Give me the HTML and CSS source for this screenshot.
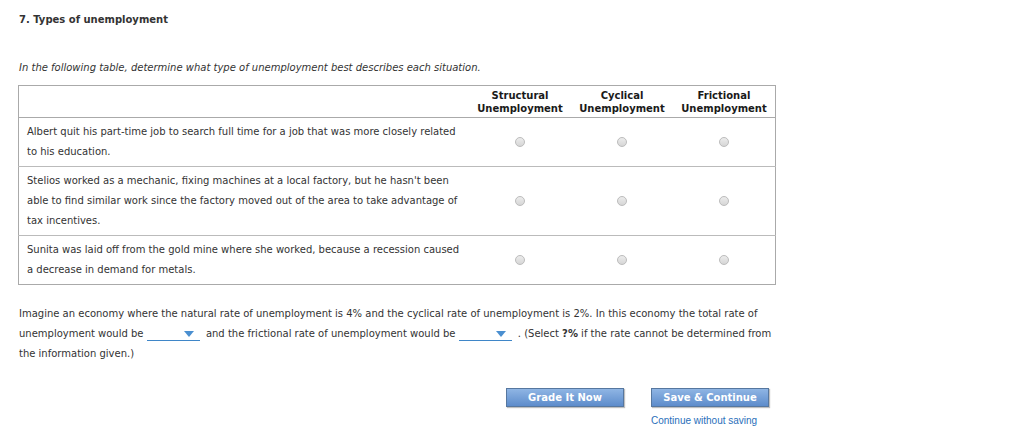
FILE: index.html
```html
<!DOCTYPE html>
<html>
<head>
<meta charset="utf-8">
<link rel="stylesheet" href="styles.css">
</head>
<body>
<div class="page">
  <h1 class="title">7. Types of unemployment</h1>
  <p class="instr">In the following table, determine what type of unemployment best describes each situation.</p>
  <table class="grid">
    <thead>
      <tr>
        <th class="desc"></th>
        <th class="opt">Structural<br>Unemployment</th>
        <th class="opt">Cyclical<br>Unemployment</th>
        <th class="opt">Frictional<br>Unemployment</th>
      </tr>
    </thead>
    <tbody>
      <tr>
        <td class="desc">Albert quit his part-time job to search full time for a job that was more closely related to his education.</td>
        <td class="opt"><span class="radio"></span></td>
        <td class="opt"><span class="radio"></span></td>
        <td class="opt"><span class="radio"></span></td>
      </tr>
      <tr>
        <td class="desc">Stelios worked as a mechanic, fixing machines at a local factory, but he hasn't been able to find similar work since the factory moved out of the area to take advantage of tax incentives.</td>
        <td class="opt"><span class="radio"></span></td>
        <td class="opt"><span class="radio"></span></td>
        <td class="opt"><span class="radio"></span></td>
      </tr>
      <tr>
        <td class="desc">Sunita was laid off from the gold mine where she worked, because a recession caused a decrease in demand for metals.</td>
        <td class="opt"><span class="radio"></span></td>
        <td class="opt"><span class="radio"></span></td>
        <td class="opt"><span class="radio"></span></td>
      </tr>
    </tbody>
  </table>
  <p class="para"><span>Imagine an economy where the natural rate of unemployment is 4% and the cyclical rate of unemployment is 2%. In this economy the total rate of</span> <span>unemployment would be</span> <span class="drop"><span class="arrow"></span></span> <span>and the frictional rate of unemployment would be</span> <span class="drop"><span class="arrow"></span></span> <span>. (Select <b>?%</b> if the rate cannot be determined from</span> <span>the information given.)</span></p>
  <div class="actions">
    <button class="btn grade">Grade It Now</button>
    <div class="savecol">
      <button class="btn">Save &amp; Continue</button>
      <a class="link" href="#">Continue without saving</a>
    </div>
  </div>
</div>
</body>
</html>
```
FILE: styles.css
```css
html, body {
  margin: 0;
  padding: 0;
  background: #ffffff;
}
body {
  font-family: "DejaVu Sans", Verdana, sans-serif;
  font-size: 10px;
  color: #333333;
}
.page {
  padding: 13px 0 0 18px;
  width: 762px;
}
.title {
  margin: 0;
  padding-left: 1px;
  font-size: 10px;
  line-height: 14px;
  font-weight: bold;
  color: #333;
}
.instr {
  margin: 34px 0 0 0;
  padding-left: 1px;
  font-style: italic;
  line-height: 14px;
}
.grid {
  margin-top: 10px;
  width: 758px;
  border-collapse: collapse;
  border: 1px solid #aaaaaa;
}
.grid th {
  font-weight: bold;
  color: #1a1a1a;
  line-height: 13px;
  padding: 3px 0 2px 0;
  border-bottom: 1px solid #aaaaaa;
}
.grid td {
  border-top: 1px solid #bbbbbb;
  line-height: 20px;
  padding: 4px 0 4px 0;
}
.grid td.desc {
  padding-left: 8px;
  padding-right: 8px;
}
.desc {
  width: 434px;
}
.opt {
  width: 102px;
  text-align: center;
}
.radio {
  display: inline-block;
  width: 10px;
  height: 10px;
  border-radius: 50%;
  border: 1px solid #bdbdbd;
  background: linear-gradient(#ececec, #d6d6d6);
  vertical-align: middle;
  box-sizing: border-box;
}
.para {
  margin: 19px 0 0 0;
  padding-left: 1px;
  line-height: 20px;
}
.drop {
  display: inline-block;
  position: relative;
  width: 53px;
  height: 14px;
  border-bottom: 1px solid #3f86c8;
  vertical-align: -4px;
  margin: 0 3px 0 0;
}
.arrow {
  position: absolute;
  right: 6px;
  top: 5px;
  width: 0;
  height: 0;
  border-left: 5px solid transparent;
  border-right: 5px solid transparent;
  border-top: 6px solid #4a8fd0;
}
.actions {
  margin-top: 24px;
  padding-left: 488px;
  display: flex;
  gap: 27px;
}
.savecol {
  display: flex;
  flex-direction: column;
  align-items: flex-start;
}
.btn {
  width: 118px;
  height: 19px;
  padding: 0;
  border: 1px solid #56779f;
  background: linear-gradient(#8fb5e4, #5d8ccb);
  color: #ffffff;
  font-family: "DejaVu Sans", Verdana, sans-serif;
  font-size: 10px;
  font-weight: bold;
  box-shadow: 1px 1px 1px rgba(0,0,0,0.25);
  cursor: pointer;
}
.link {
  margin-top: 7px;
  font-family: "Liberation Sans", Arial, sans-serif;
  font-size: 10px;
  line-height: 14px;
  color: #2a6fba;
  text-decoration: none;
}
```
